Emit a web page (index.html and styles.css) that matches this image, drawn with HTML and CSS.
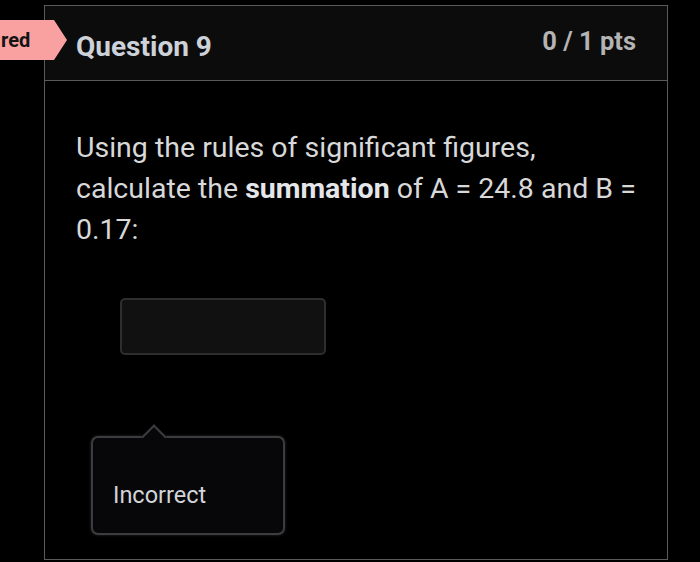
FILE: index.html
```html
<!DOCTYPE html>
<html lang="en">
<head>
    <meta charset="UTF-8">
    <meta name="viewport" content="width=device-width, initial-scale=1.0">
    <title>Question 9</title>
    <link rel="stylesheet" href="styles.css">
</head>
<body>
    <div class="page">
        <div class="status-tag">red</div>

        <div class="question-card">
            <div class="question-header">
                <h2 class="question-title">Question 9</h2>
                <div class="question-points">0 / 1 pts</div>
            </div>

            <div class="question-body">
                <p class="question-text">
                    Using the rules of significant figures, calculate the <strong>summation</strong> of A = 24.8 and B = 0.17:
                </p>

                <input type="text" class="answer-input">

                <div class="answer-feedback">
                    <span class="feedback-text">Incorrect</span>
                </div>
            </div>
        </div>
    </div>
</body>
</html>
```

FILE: styles.css
```css
body {
    margin: 0;
    padding: 0;
    background: #000000;
    font-family: "Roboto", "Liberation Sans", sans-serif;
    color: #d6d6d6;
    overflow: hidden;
}

.page {
    position: relative;
    padding: 5px 32px 0 44px;
}

/* 左端のステータスタグ */
.status-tag {
    position: absolute;
    top: 20px;
    left: 0;
    width: 67px;
    height: 40px;
    background: #f9a1a0;
    clip-path: polygon(0 0, 54px 0, 100% 50%, 54px 100%, 0 100%);
    color: #141414;
    font-weight: bold;
    font-size: 20px;
    line-height: 40px;
    padding-left: 1px;
    box-sizing: border-box;
    z-index: 2;
}

.question-card {
    border: 1px solid #5a5a5a;
    height: 555px;
    box-sizing: border-box;
}

.question-header {
    background: #0c0c0c;
    border-bottom: 1px solid #5a5a5a;
    height: 75px;
    box-sizing: border-box;
    display: flex;
    justify-content: space-between;
    align-items: flex-start;
    padding: 0 31px;
}

.question-title {
    margin: 25px 0 0 0;
    font-size: 28px;
    font-weight: bold;
    color: #cdd1d8;
    line-height: 32px;
}

.question-points {
    margin-top: 19px;
    font-size: 25.5px;
    font-weight: bold;
    color: #b4b4b4;
    line-height: 32px;
}

.question-body {
    padding: 46px 31px 0 31px;
}

.question-text {
    margin: 0;
    font-size: 28.5px;
    line-height: 41px;
    color: #d8d8d8;
    max-width: 575px;
}

.question-text strong {
    color: #e4e6ea;
}

.answer-input {
    display: block;
    margin: 48px 0 0 44px;
    width: 206px;
    height: 57px;
    box-sizing: border-box;
    background: #111111;
    border: 2px solid #2e2e2e;
    border-radius: 5px;
    outline: none;
}

.answer-feedback {
    position: relative;
    margin: 81px 0 0 15px;
    width: 194px;
    height: 99px;
    box-sizing: border-box;
    background: #070709;
    border: 2px solid #3c3c3f;
    border-radius: 7px;
    box-shadow: 0 0 3px #2a2a2a;
    display: flex;
    align-items: center;
    padding: 18px 20px 0 20px;
}

/* 吹き出しの三角 */
.answer-feedback::before {
    content: "";
    position: absolute;
    top: -10px;
    left: 52px;
    width: 16px;
    height: 16px;
    background: #070709;
    border-top: 2px solid #3c3c3f;
    border-left: 2px solid #3c3c3f;
    transform: rotate(45deg);
}

.feedback-text {
    position: relative;
    font-size: 23.5px;
    color: #d2d4d8;
}
```
